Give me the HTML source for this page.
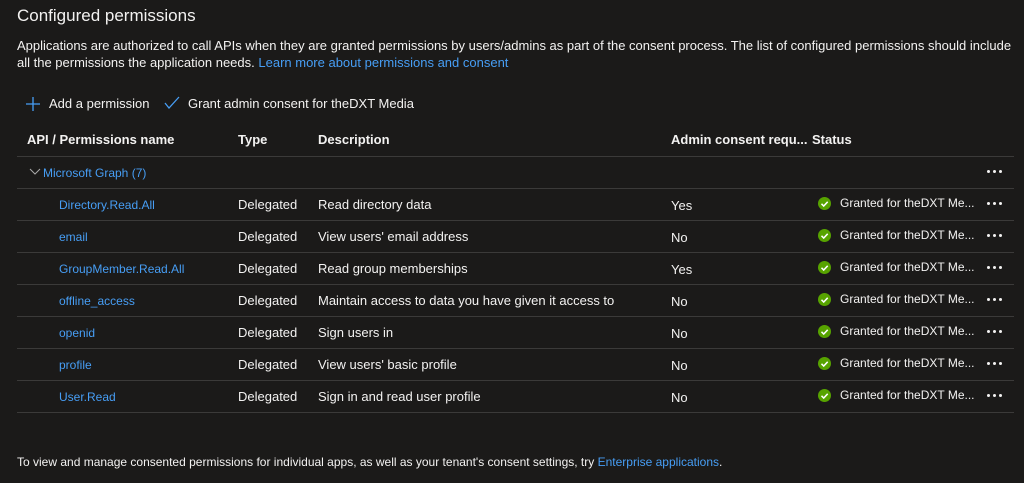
<!DOCTYPE html><html><head><style>
body{margin:0;width:1024px;height:483px;background:#1b1a19;color:#f3f2f1;font-family:"Liberation Sans",sans-serif;font-size:13px;position:relative;overflow:hidden}
.a{position:absolute;white-space:nowrap}
.l{color:#479ef5}
.ln{position:absolute;left:17px;width:997px;height:1px;background:#3b3a39}
.b{font-weight:bold}
.ck{position:absolute;width:13px;height:13px;border-radius:50%;background:#57a300}
.dots{position:absolute;width:16px;height:3px}
.dots i{position:absolute;top:0;width:3px;height:3px;border-radius:50%;background:#f3f2f1}
</style></head><body>
<div class="a" style="left:17px;top:6px;font-size:17px">Configured permissions</div>
<div class="a" style="left:17px;top:38px">Applications are authorized to call APIs when they are granted permissions by users/admins as part of the consent process. The list of configured permissions should include</div>
<div class="a" style="left:17px;top:55px">all the permissions the application needs. <span class="l">Learn more about permissions and consent</span></div>
<svg class="a" style="left:25px;top:96px" width="16" height="16"><path d="M8 1v14M1 8h14" stroke="#479ef5" stroke-width="1.3"/></svg>
<div class="a" style="left:49px;top:96px">Add a permission</div>
<svg class="a" style="left:164px;top:96px" width="16" height="14"><path d="M1 7l4 5L15 1" stroke="#479ef5" stroke-width="1.3" fill="none"/></svg>
<div class="a" style="left:188px;top:96px">Grant admin consent for theDXT Media</div>
<div class="a b" style="left:27px;top:132px">API / Permissions name</div>
<div class="a b" style="left:238px;top:132px">Type</div>
<div class="a b" style="left:318px;top:132px">Description</div>
<div class="a b" style="left:671px;top:132px">Admin consent requ...</div>
<div class="a b" style="left:812px;top:132px">Status</div>
<div class="ln" style="top:156px"></div>
<svg class="a" style="left:29px;top:168px" width="12" height="8"><path d="M1 1l5 5 5-5" stroke="#aaa" fill="none"/></svg>
<div class="a l" style="left:43px;top:166px;font-size:12px">Microsoft Graph (7)</div>
<div class="dots" style="left:987px;top:170px"><i style="left:0"></i><i style="left:6px"></i><i style="left:12px"></i></div>
<div class="ln" style="top:188px"></div>
<div id="rows"></div>
<script>
var r=[["Directory.Read.All","Read directory data","Yes"],["email","View users' email address","No"],["GroupMember.Read.All","Read group memberships","Yes"],["offline_access","Maintain access to data you have given it access to","No"],["openid","Sign users in","No"],["profile","View users' basic profile","No"],["User.Read","Sign in and read user profile","No"]];
var h="";r.forEach(function(x,i){var t=188+i*32;
h+='<div class="a l" style="left:59px;top:'+(t+10)+'px;font-size:12px">'+x[0]+'</div><div class="a" style="left:238px;top:'+(t+9)+'px">Delegated</div><div class="a" style="left:318px;top:'+(t+9)+'px">'+x[1]+'</div><div class="a" style="left:671px;top:'+(t+10)+'px">'+x[2]+'</div><div class="ck" style="left:818px;top:'+(t+9)+'px"><svg width="13" height="13" style="position:absolute;left:0;top:0"><path d="M3.5 6.8l2.2 2.2 4-4.2" stroke="#fff" stroke-width="1.5" fill="none"/></svg></div><div class="a" style="left:840px;top:'+(t+8)+'px;font-size:12px">Granted for theDXT Me...</div><div class="dots" style="left:987px;top:'+(t+14)+'px"><i style="left:0"></i><i style="left:6px"></i><i style="left:12px"></i></div><div class="ln" style="top:'+(t+32)+'px"></div>';});
document.getElementById("rows").innerHTML=h;
</script>
<div class="a" style="left:17px;top:455px;font-size:12px">To view and manage consented permissions for individual apps, as well as your tenant's consent settings, try <span class="l">Enterprise applications</span>.</div>
</body></html>
